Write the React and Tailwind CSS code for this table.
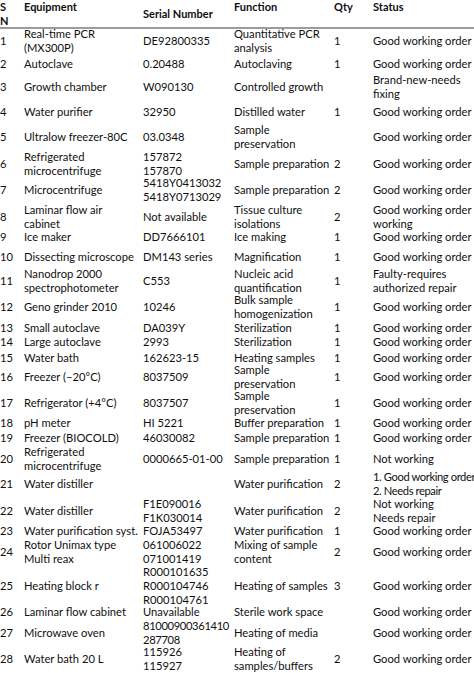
import React from 'react';

const rows = [
  { n: '1', eq: ['Real-time PCR', '(MX300P)'], sn: ['DE92800335'], fn: ['Quantitative PCR', 'analysis'], qty: '1', st: ['Good working order'], h: 'h-[24px]' },
  { n: '2', eq: ['Autoclave'], sn: ['0.20488'], fn: ['Autoclaving'], qty: '1', st: ['Good working order'], h: 'h-[22px]' },
  { n: '3', eq: ['Growth chamber'], sn: ['W090130'], fn: ['Controlled growth'], qty: '', st: ['Brand-new-needs', 'fixing'], h: 'h-[24px]' },
  { n: '4', eq: ['Water purifier'], sn: ['32950'], fn: ['Distilled water'], qty: '1', st: ['Good working order'], h: 'h-[25px]' },
  { n: '5', eq: ['Ultralow freezer-80C'], sn: ['03.0348'], fn: ['Sample', 'preservation'], qty: '', st: ['Good working order'], h: 'h-[26px]' },
  { n: '6', eq: ['Refrigerated', 'microcentrifuge'], sn: ['157872', '157870'], fn: ['Sample preparation'], qty: '2', st: ['Good working order'], h: 'h-[27px]' },
  { n: '7', eq: ['Microcentrifuge'], sn: ['5418Y0413032', '5418Y0713029'], fn: ['Sample preparation'], qty: '2', st: ['Good working order'], h: 'h-[26px]' },
  { n: '8', eq: ['Laminar flow air', 'cabinet'], sn: ['Not available'], fn: ['Tissue culture', 'isolations'], qty: '2', st: ['Good working order', 'working'], h: 'h-[24px] pt-[4px]' },
  { n: '9', eq: ['Ice maker'], sn: ['DD7666101'], fn: ['Ice making'], qty: '1', st: ['Good working order'], h: 'h-[19px]' },
  { n: '10', eq: ['Dissecting microscope'], sn: ['DM143 series'], fn: ['Magnification'], qty: '1', st: ['Good working order'], h: 'h-[22px]' },
  { n: '11', eq: ['Nanodrop 2000', 'spectrophotometer'], sn: ['C553'], fn: ['Nucleic acid', 'quantification'], qty: '1', st: ['Faulty-requires', 'authorized repair'], h: 'h-[26px]' },
  { n: '12', eq: ['Geno grinder 2010'], sn: ['10246'], fn: ['Bulk sample', 'homogenization'], qty: '1', st: ['Good working order'], h: 'h-[23px] pt-[2px]' },
  { n: '13', eq: ['Small autoclave'], sn: ['DA039Y'], fn: ['Sterilization'], qty: '1', st: ['Good working order'], h: 'h-[18px] pt-[3px]' },
  { n: '14', eq: ['Large autoclave'], sn: ['2993'], fn: ['Sterilization'], qty: '1', st: ['Good working order'], h: 'h-[14px]' },
  { n: '15', eq: ['Water bath'], sn: ['162623-15'], fn: ['Heating samples'], qty: '1', st: ['Good working order'], h: 'h-[17px]' },
  { n: '16', eq: ['Freezer (\u201320\u00b0C)'], sn: ['8037509'], fn: ['Sample', 'preservation'], qty: '1', st: ['Good working order'], h: 'h-[23px] pb-[2px]' },
  { n: '17', eq: ['Refrigerator (+4\u00b0C)'], sn: ['8037507'], fn: ['Sample', 'preservation'], qty: '1', st: ['Good working order'], h: 'h-[24px] pt-[4px]' },
  { n: '18', eq: ['pH meter'], sn: ['HI 5221'], fn: ['Buffer preparation'], qty: '1', st: ['Good working order'], h: 'h-[17px] pt-[2px]' },
  { n: '19', eq: ['Freezer (BIOCOLD)'], sn: ['46030082'], fn: ['Sample preparation'], qty: '1', st: ['Good working order'], h: 'h-[17px] pb-[2px]' },
  { n: '20', eq: ['Refrigerated', 'microcentrifuge'], sn: ['0000665-01-00'], fn: ['Sample preparation'], qty: '1', st: ['Not working'], h: 'h-[24px]' },
  { n: '21', eq: ['Water distiller'], sn: [], fn: ['Water purification'], qty: '2', st: ['1. Good working order', '2. Needs repair'], h: 'h-[26px]', stTight: true },
  { n: '22', eq: ['Water distiller'], sn: ['F1E090016', 'F1K030014'], fn: ['Water purification'], qty: '2', st: ['Not working', 'Needs repair'], h: 'h-[24px] pt-[4px]' },
  { n: '23', eq: ['Water purification syst.'], sn: ['FOJA53497'], fn: ['Water purification'], qty: '1', st: ['Good working order'], h: 'h-[20px]' },
  { n: '24', eq: ['Rotor Unimax type', 'Multi reax'], sn: ['061006022', '071001419'], fn: ['Mixing of sample', 'content'], qty: '2', st: ['Good working order'], h: 'h-[28px] pb-[6px]' },
  { n: '25', eq: ['Heating block r'], sn: ['R000101635', 'R000104746', 'R000104761'], fn: ['Heating of samples'], qty: '3', st: ['Good working order'], h: 'h-[30px] pt-[4px]' },
  { n: '26', eq: ['Laminar flow cabinet'], sn: ['Unavailable'], fn: ['Sterile work space'], qty: '', st: ['Good working order'], h: 'h-[23px] pt-[3px]' },
  { n: '27', eq: ['Microwave oven'], sn: ['81000900361410', '287708'], fn: ['Heating of media'], qty: '', st: ['Good working order'], h: 'h-[23px] pb-[2px]', snTight: true },
  { n: '28', eq: ['Water bath 20 L'], sn: ['115926', '115927'], fn: ['Heating of', 'samples/buffers'], qty: '2', st: ['Good working order'], h: 'h-[28px]' },
];

const Cell = ({ lines, className }) => (
  <div className={`flex shrink-0 flex-col justify-center whitespace-nowrap ${className}`}>
    {lines.map((l, i) => (
      <span key={i}>{l}</span>
    ))}
  </div>
);

export default function App() {
  return (
    <div
      className="w-[474px] h-[673px] overflow-hidden bg-white text-[#0f0f0f] text-[11.2px] leading-[14px]"
      style={{ fontFamily: 'Lato, "Open Sans", sans-serif' }}
    >
      <div className="flex h-[29px] border-b-2 border-[#9b9b9b] font-bold text-[11px]">
        <div className="w-[24px] shrink-0 flex flex-col">
          <span>S</span>
          <span>N</span>
        </div>
        <div className="w-[119px] shrink-0">Equipment</div>
        <div className="w-[91px] shrink-0 flex items-center">Serial Number</div>
        <div className="w-[100px] shrink-0">Function</div>
        <div className="w-[39px] shrink-0">Qty</div>
        <div className="flex-1">Status</div>
      </div>
      {rows.map((r) => (
        <div key={r.n} className={`flex box-border ${r.h}`}>
          <Cell lines={[r.n]} className="w-[24px]" />
          <Cell lines={r.eq} className="w-[119px]" />
          <Cell lines={r.sn} className={`w-[91px] ${r.snTight ? 'tracking-[-0.35px]' : ''}`} />
          <Cell lines={r.fn} className="w-[100px]" />
          <Cell lines={r.qty ? [r.qty] : []} className="w-[39px]" />
          <Cell lines={r.st} className={`flex-1 min-w-0 ${r.stTight ? 'tracking-[-0.4px]' : ''}`} />
        </div>
      ))}
    </div>
  );
}
